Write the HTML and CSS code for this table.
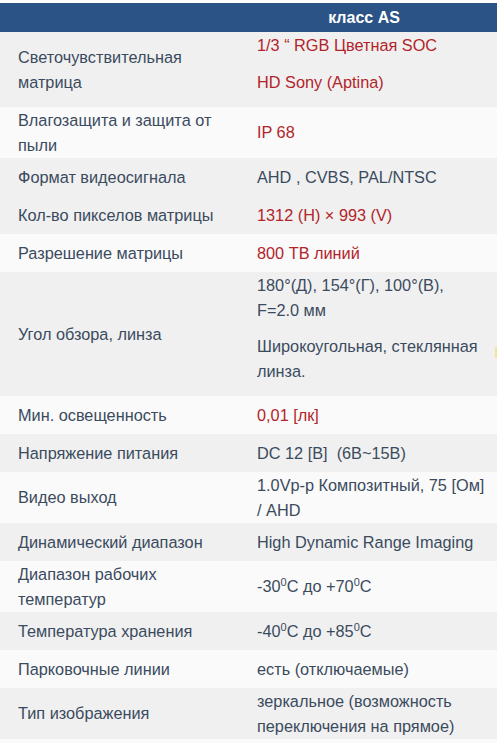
FILE: index.html
```
<!DOCTYPE html>
<html lang="ru">
<head>
<meta charset="utf-8">
<title>Характеристики</title>
<link rel="stylesheet" href="styles.css">
</head>
<body>
<table class="specs">
  <colgroup><col class="c1"><col class="c2"></colgroup>
  <thead>
    <tr><th class="h-empty"></th><th class="h-title">класс AS</th></tr>
  </thead>
  <tbody>
    <tr class="g"><td>Светочувствительная матрица</td><td class="v"><p class="red">1/3 “ RGB Цветная SOC</p><p class="red">HD Sony (Aptina)</p></td></tr>
    <tr class="w"><td>Влагозащита и защита от пыли</td><td class="v red">IP 68</td></tr>
    <tr class="g"><td>Формат видеосигнала</td><td class="v">AHD , CVBS, PAL/NTSC</td></tr>
    <tr class="g"><td>Кол-во пикселов матрицы</td><td class="v red">1312 (H) × 993 (V)</td></tr>
    <tr class="w"><td>Разрешение матрицы</td><td class="v red">800 ТВ линий</td></tr>
    <tr class="g"><td>Угол обзора, линза</td><td class="v"><p>180°(Д), 154°(Г), 100°(В), F=2.0 мм</p><p class="rel">Широкоугольная, стеклянная линза.<span class="mark"></span></p></td></tr>
    <tr class="w"><td>Мин. освещенность</td><td class="v red">0,01 [лк]</td></tr>
    <tr class="g"><td>Напряжение питания</td><td class="v">DC 12 [В]&nbsp; (6В~15В)</td></tr>
    <tr class="w"><td>Видео выход</td><td class="v">1.0Vp-p Композитный, 75 [Ом] / AHD</td></tr>
    <tr class="g"><td>Динамический диапазон</td><td class="v">High Dynamic Range Imaging</td></tr>
    <tr class="w"><td>Диапазон рабочих температур</td><td class="v">-30<sup>0</sup>C до +70<sup>0</sup>C</td></tr>
    <tr class="g"><td>Температура хранения</td><td class="v">-40<sup>0</sup>C до +85<sup>0</sup>C</td></tr>
    <tr class="w"><td>Парковочные линии</td><td class="v">есть (отключаемые)</td></tr>
    <tr class="g"><td>Тип изображения</td><td class="v">зеркальное (возможность переключения на прямое)</td></tr>
    <tr class="w"><td></td><td class="v"><span class="pink"></span></td></tr>
  </tbody>
</table>
</body>
</html>
```
FILE: styles.css
```
html, body {
  margin: 0;
  padding: 0;
  background: #ffffff;
}
body {
  font-family: "Liberation Sans", Arial, sans-serif;
  font-size: 16.3px;
  color: #3b4b5e;
  overflow: hidden;
}
.specs {
  margin-top: 3px;
  width: 497px;
  border-collapse: collapse;
  table-layout: fixed;
}
.c1 { width: 245px; }
.c2 { width: 252px; }
.specs th {
  background: #2b5386;
  color: #ffffff;
  font-weight: bold;
  font-size: 16px;
  height: 29px;
  padding: 0;
  line-height: 29px;
}
.h-title {
  text-align: center;
  padding: 0 26px 0 12px !important;
}
.specs td {
  height: 36px;
  padding: 1px 12px 1px 18px;
  line-height: 24.5px;
  vertical-align: middle;
}
.specs td.v {
  padding: 1px 10px 1px 12px;
}
.g td { background: #f0f0f0; }
.w td { background: #fafafa; }
.v p {
  margin: 0 0 12px 0;
}
.red { color: #b3242a; }
sup {
  font-size: 11px;
  vertical-align: 6px;
  line-height: 0;
}
.rel { position: relative; }
.mark {
  position: absolute;
  right: -10px;
  top: 13px;
  width: 2px;
  height: 11px;
  background: #f2e49a;
}
.pink {
  display: inline-block;
  width: 22px;
  height: 10px;
  margin-left: 73px;
  margin-top: 4px;
  background: #d79aa6;
  border-radius: 4px 4px 0 0;
  vertical-align: top;
}
```
